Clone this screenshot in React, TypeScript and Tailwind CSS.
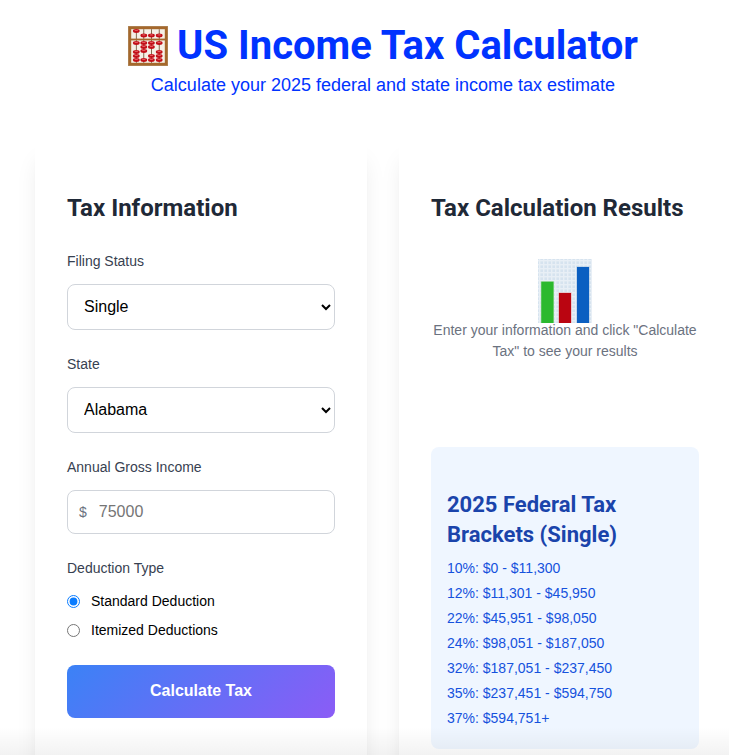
import React from "react";

const brackets = [
  "10%: $0 - $11,300",
  "12%: $11,301 - $45,950",
  "22%: $45,951 - $98,050",
  "24%: $98,051 - $187,050",
  "32%: $187,051 - $237,450",
  "35%: $237,451 - $594,750",
  "37%: $594,751+",
];

// bead centres per rod, the top one(s) above the divider
const abacusRods = [
  { x: 8.3, beads: [5, 17, 26, 30, 34] },
  { x: 15.8, beads: [9.5, 17, 21, 25, 34] },
  { x: 23.4, beads: [9.5, 17, 21, 30, 34] },
  { x: 31.2, beads: [9.5, 17, 26, 30, 34] },
];

const AbacusIcon: React.FC = () => (
  <svg width="40" height="40" viewBox="0 0 40 40" className="shrink-0">
    <rect width="40" height="40" fill="#b08a5e" />
    <rect x="0.7" y="0.7" width="38.6" height="38.6" fill="#a5682c" />
    <rect x="3.2" y="3.2" width="33.6" height="33.6" fill="#f5f0e6" />
    {abacusRods.map((rod) => (
      <rect key={rod.x} x={rod.x - 0.4} y="3.2" width="0.8" height="33.6" fill="#6a4a2a" />
    ))}
    <rect x="3" y="12.6" width="34" height="1.8" fill="#a5682c" />
    {abacusRods.map((rod) =>
      rod.beads.map((cy) => (
        <g key={`${rod.x}-${cy}`}>
          <ellipse cx={rod.x} cy={cy} rx="3.4" ry="1.9" fill="#c20f18" />
          <ellipse cx={rod.x} cy={cy - 0.6} rx="1.8" ry="0.6" fill="#e2575c" />
        </g>
      )),
    )}
  </svg>
);

const ChartIcon: React.FC = () => {
  const lines = Array.from({ length: 16 }, (_, i) => 1 + i * 4);
  return (
    <svg width="54" height="64" viewBox="0 0 54 64" className="block">
      <rect width="54" height="64" fill="#d6e3ef" />
      {lines.map((p) => (
        <g key={p}>
          <rect x={p} y="0" width="1.4" height="64" fill="#e8eff6" />
          <rect x="0" y={p} width="54" height="1.4" fill="#e8eff6" />
        </g>
      ))}
      <rect x="2.8" y="22.2" width="13.2" height="41.8" fill="#b5dfb5" />
      <rect x="3.3" y="22.7" width="12.2" height="41.3" fill="#2cb92e" />
      <rect x="20.5" y="33.5" width="13" height="30.5" fill="#e0a8ac" />
      <rect x="21" y="34" width="12" height="30" fill="#ba0511" />
      <rect x="38.5" y="7.5" width="13" height="56.5" fill="#a8c6e6" />
      <rect x="39" y="8" width="12" height="56" fill="#0b5fc1" />
    </svg>
  );
};

const fieldLabel = "block mb-3 text-sm leading-[21px] text-[#374151]";
const selectBox =
  "block w-full h-[46px] px-3 pb-0.5 text-base text-black bg-white border border-[#d1d5db] rounded-lg";
const card =
  "w-[332px] h-[700px] shrink-0 bg-white rounded-xl p-8 shadow-[0_20px_25px_-5px_rgba(0,0,0,0.1),0_10px_10px_-5px_rgba(0,0,0,0.04)]";

export default function App() {
  return (
    <div className="relative h-[755px] overflow-hidden bg-white font-['Liberation_Sans',sans-serif]">
      <div className="w-[766px]">
        <header className="pt-4 text-center text-[#0033ff]">
          <h1 className="flex items-center justify-center gap-[9px] font-['Roboto',sans-serif] text-[40px] leading-[60px] font-bold">
            <AbacusIcon />
            US Income Tax Calculator
          </h1>
          <p className="text-lg leading-[18px]">
            Calculate your 2025 federal and state income tax estimate
          </p>
        </header>

        <main className="flex gap-8 pl-[35px] mt-[43px]">
          <section className={card}>
            <h2 className="mt-[21px] mb-[25px] font-['Roboto',sans-serif] text-2xl leading-9 font-bold text-[#1f2937]">
              Tax Information
            </h2>

            <label className={fieldLabel}>Filing Status</label>
            <select className={selectBox} defaultValue="Single">
              <option>Single</option>
              <option>Married Filing Jointly</option>
            </select>

            <label className={`${fieldLabel} mt-6`}>State</label>
            <select className={selectBox} defaultValue="Alabama">
              <option>Alabama</option>
              <option>Alaska</option>
            </select>

            <label className={`${fieldLabel} mt-6`}>Annual Gross Income</label>
            <div className="flex items-center h-[44px] pl-[11px] pr-3 border border-[#d1d5db] rounded-lg">
              <span className="text-sm text-[#6b7280] mr-3">$</span>
              <input
                className="min-w-0 flex-1 text-base outline-none placeholder:text-[#757575]"
                placeholder="75000"
              />
            </div>

            <label className={`${fieldLabel} mt-6`}>Deduction Type</label>
            <div className="flex flex-col gap-2 mt-2">
              <label className="flex items-center gap-[11px] text-sm leading-[21px] text-black">
                <input type="radio" name="deduction" defaultChecked className="w-[13px] h-[13px] m-0 accent-[#0a7cff]" />
                Standard Deduction
              </label>
              <label className="flex items-center gap-[11px] text-sm leading-[21px] text-black">
                <input type="radio" name="deduction" className="w-[13px] h-[13px] m-0" />
                Itemized Deductions
              </label>
            </div>

            <button className="block w-full h-[53px] mt-6 pb-0.5 rounded-lg bg-[linear-gradient(135deg,#3b82f6,#8b5cf6)] text-base font-bold text-white">
              Calculate Tax
            </button>
          </section>

          <section className={card}>
            <h2 className="mt-[21px] font-['Roboto',sans-serif] text-2xl leading-9 font-bold text-[#1f2937]">
              Tax Calculation Results
            </h2>

            <div className="flex flex-col items-center mt-[33px] text-center text-sm leading-[21px] text-[#6b7280]">
              <ChartIcon />
              <p className="-mt-[3px]">Enter your information and click "Calculate Tax" to see your results</p>
            </div>

            <div className="mt-[85px] w-[268px] h-[302px] rounded-lg bg-[#eff6ff] px-4 pt-[43px]">
              <h3 className="mb-[6px] font-['Roboto',sans-serif] text-[22px] leading-[30px] font-bold text-[#1a44ab]">
                2025 Federal Tax Brackets (Single)
              </h3>
              <ul className="text-sm leading-[25px] text-[#1552dd]">
                {brackets.map((b) => (
                  <li key={b}>{b}</li>
                ))}
              </ul>
            </div>
          </section>
        </main>
      </div>

      {/* soft shade along the bottom edge of the window */}
      <div className="absolute inset-x-0 bottom-0 h-[28px] pointer-events-none bg-gradient-to-t from-black/5 to-transparent" />
    </div>
  );
}
